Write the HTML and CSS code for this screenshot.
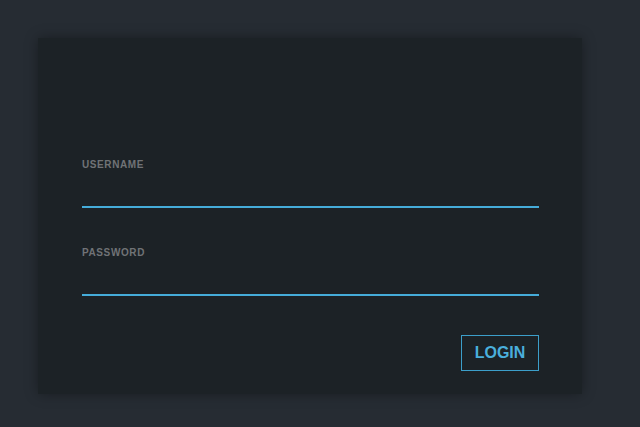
FILE: index.html
```html
<!DOCTYPE html>
<html lang="en">
<head>
    <meta charset="UTF-8">
    <meta name="viewport" content="width=device-width, initial-scale=1.0">
    <title>Login</title>
    <link rel="stylesheet" href="styles.css">
</head>
<body>
    <div class="card">
        <form class="login-form">
            <div class="field">
                <label for="username">Username</label>
                <input type="text" id="username" name="username">
            </div>
            <div class="field">
                <label for="password">Password</label>
                <input type="password" id="password" name="password">
            </div>
            <div class="actions">
                <button type="submit" class="login-btn">LOGIN</button>
            </div>
        </form>
    </div>
</body>
</html>
```

FILE: styles.css
```css
html, body {
    height: 100%;
}
body {
    margin: 0;
    background-color: #262c33;
    font-family: "Liberation Sans", Arial, sans-serif;
    overflow: hidden;
}
.card {
    width: 544px;
    height: 356px;
    box-sizing: border-box;
    margin: 38px 0 0 38px;
    padding: 121px 43px 0 44px;
    background-color: #1c2226;
    box-shadow: 0 0 12px rgba(0, 0, 0, 0.35);
}
.login-form {
    display: flex;
    flex-direction: column;
}
.field {
    display: flex;
    flex-direction: column;
    margin-bottom: 39px;
}
.field:last-of-type {
    margin-bottom: 37px;
}
.field label {
    font-size: 10px;
    line-height: 12px;
    font-weight: bold;
    letter-spacing: 0.6px;
    text-transform: uppercase;
    color: #707376;
}
.field input {
    height: 37px;
    box-sizing: border-box;
    padding: 0;
    border: none;
    border-bottom: 2px solid #45acd9;
    background: transparent;
    color: #d0d4d8;
    font-size: 15px;
    outline: none;
}
.actions {
    display: flex;
    justify-content: flex-end;
}
.login-btn {
    width: 78px;
    height: 36px;
    padding: 0;
    border: 1px solid #3c9fca;
    background: transparent;
    color: #4aafdc;
    font-family: "Liberation Sans", Arial, sans-serif;
    font-size: 16px;
    font-weight: bold;
    cursor: pointer;
}
```
